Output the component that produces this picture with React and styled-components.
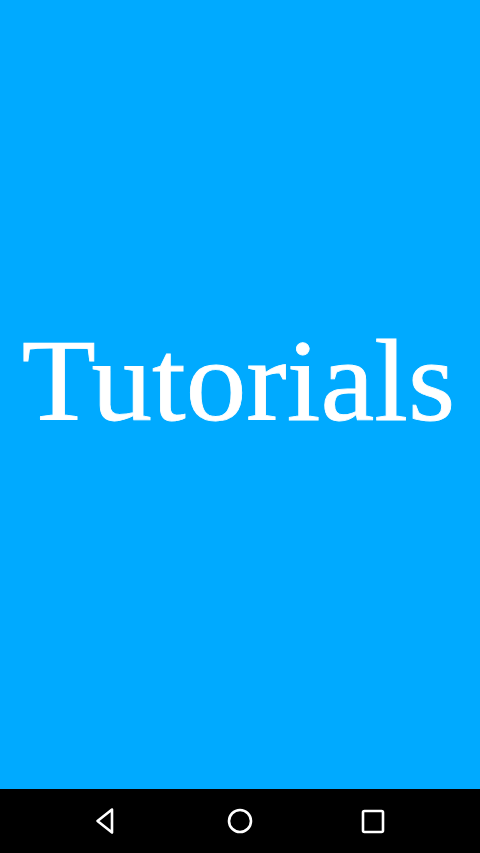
import React from "react";
import styled, { createGlobalStyle } from "styled-components";

const GlobalStyle = createGlobalStyle`
  html, body { margin: 0; padding: 0; }
  body { font-family: "Liberation Serif", serif; }
`;

const Screen = styled.div`
  width: 480px;
  height: 853px;
  display: flex;
  flex-direction: column;
  overflow: hidden;
`;

const Splash = styled.div`
  flex: 1;
  background: #00aaff;
  display: flex;
  align-items: center;
  justify-content: center;
  padding-bottom: 27px;
  padding-right: 4px;
`;

const Title = styled.h1`
  margin: 0;
  font-family: "Liberation Serif", "Times New Roman", serif;
  font-weight: normal;
  font-size: 116px;
  line-height: 1;
  color: #ffffff;
  -webkit-text-stroke: 0.8px #ffffff;
  transform: scaleX(1.045);
`;

const NavBar = styled.div`
  height: 64px;
  background: #000;
  display: flex;
  align-items: center;
  justify-content: center;
`;

const NavButton = styled.div`
  width: 133px;
  height: 64px;
  display: flex;
  align-items: center;
  justify-content: center;
`;

function App() {
  return (
    <>
      <GlobalStyle />
      <Screen>
        <Splash>
          <Title>Tutorials</Title>
        </Splash>
        <NavBar>
          <NavButton>
            <svg width="26" height="28" viewBox="0 0 26 28">
              <path d="M18 2.5 L3.5 14 L18 25.5 Z" fill="none" stroke="#fff" strokeWidth="2.6" strokeLinejoin="round" />
            </svg>
          </NavButton>
          <NavButton>
            <svg width="28" height="28" viewBox="0 0 28 28">
              <circle cx="14" cy="14" r="11" fill="none" stroke="#fff" strokeWidth="2.6" />
            </svg>
          </NavButton>
          <NavButton>
            <svg width="28" height="28" viewBox="0 0 28 28">
              <rect x="4" y="4" width="20" height="21" rx="1.5" fill="none" stroke="#fff" strokeWidth="2.6" />
            </svg>
          </NavButton>
        </NavBar>
      </Screen>
    </>
  );
}

export default App;
